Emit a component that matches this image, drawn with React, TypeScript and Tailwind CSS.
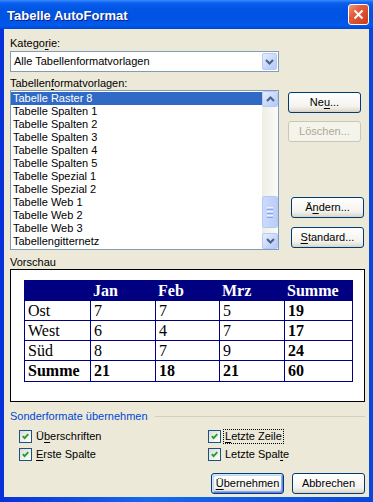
import type { ReactNode } from 'react'
import clsx from 'clsx'

const items = [
  'Tabelle Raster 8',
  'Tabelle Spalten 1',
  'Tabelle Spalten 2',
  'Tabelle Spalten 3',
  'Tabelle Spalten 4',
  'Tabelle Spalten 5',
  'Tabelle Spezial 1',
  'Tabelle Spezial 2',
  'Tabelle Web 1',
  'Tabelle Web 2',
  'Tabelle Web 3',
  'Tabellengitternetz',
]

const rows = [
  ['Ost', '7', '7', '5', '19'],
  ['West', '6', '4', '7', '17'],
  ['Süd', '8', '7', '9', '24'],
]

function U({ children }: { children: ReactNode }) {
  return <span className="underline decoration-1 underline-offset-[2px]">{children}</span>
}

function XpButton({
  children,
  disabled,
  isDefault,
  className,
}: {
  children: ReactNode
  disabled?: boolean
  isDefault?: boolean
  className?: string
}) {
  return (
    <div
      className={clsx(
        'h-[21px] w-[73px] shrink-0 rounded-[3px] border flex items-center justify-center',
        disabled
          ? 'border-[#c9c7ba] bg-[#f5f4ea] text-[#aca899]'
          : 'border-[#003c74] bg-[linear-gradient(180deg,#ffffff_0%,#f4f3ee_70%,#e3e0d5_90%,#d6d0c5_100%)]',
        isDefault &&
          'shadow-[inset_1px_1px_0_#cee7ff,inset_-1px_-1px_0_#6982ee,inset_2px_2px_0_#bcd4f6,inset_-2px_-2px_0_#89adf4]',
        className
      )}
    >
      {children}
    </div>
  )
}

function Chevron({ up }: { up?: boolean }) {
  return (
    <svg width="9" height="6" viewBox="0 0 9 6">
      <path
        d={up ? 'M1 5 L4.5 1.5 L8 5' : 'M1 1 L4.5 4.5 L8 1'}
        stroke="#4d6185"
        strokeWidth="2"
        fill="none"
      />
    </svg>
  )
}

function ScrollBtn({ up, className }: { up?: boolean; className?: string }) {
  return (
    <div
      className={clsx(
        'rounded-[2px] border border-[#b7c9f4] bg-[linear-gradient(135deg,#e6eefe_0%,#c6d6fc_60%,#b5c8f7_100%)] flex items-center justify-center',
        className
      )}
    >
      <Chevron up={up} />
    </div>
  )
}

function Scrollbar() {
  return (
    <div className="w-[16px] flex flex-col bg-[linear-gradient(90deg,#eeede5,#fbfbf8)]">
      <ScrollBtn up className="h-[16px]" />
      <div className="flex-1 flex flex-col pt-[89px]">
        <div className="h-[32px] rounded-[2px] border border-[#b7c9f4] bg-[linear-gradient(90deg,#cbdafd,#bbcdf9)] flex flex-col items-center justify-center gap-[1px]">
          <div className="w-[6px] h-px bg-[#eef3fe]" />
          <div className="w-[6px] h-px bg-[#8da6e8]" />
          <div className="w-[6px] h-px bg-[#eef3fe]" />
          <div className="w-[6px] h-px bg-[#8da6e8]" />
          <div className="w-[6px] h-px bg-[#eef3fe]" />
          <div className="w-[6px] h-px bg-[#8da6e8]" />
        </div>
      </div>
      <ScrollBtn className="h-[16px]" />
    </div>
  )
}

function XpCheck() {
  return (
    <div className="w-[13px] h-[13px] shrink-0 border border-[#1c5180] bg-[linear-gradient(135deg,#dcdcd7,#ffffff)] flex items-center justify-center">
      <svg width="7" height="7" viewBox="0 0 7 7">
        <path d="M0.8 3.2 L2.6 5.2 L6.3 1.2" stroke="#21a121" strokeWidth="1.8" fill="none" />
      </svg>
    </div>
  )
}

function Check({ children, focus }: { children: ReactNode; focus?: boolean }) {
  return (
    <div className="flex items-center h-[13px]">
      <XpCheck />
      <span
        className={clsx(
          'ml-[2px] px-[1px] border',
          focus ? 'border-dotted border-black' : 'border-transparent'
        )}
      >
        {children}
      </span>
    </div>
  )
}

export default function App() {
  return (
    <div className="w-[373px] h-[502px] overflow-hidden flex flex-col bg-[#0846dc] font-['Liberation_Sans',Arial,sans-serif] text-[11px] leading-[13px] text-black select-none">
      {/* title bar */}
      <div className="h-[29px] shrink-0 flex items-center pl-[7px] pr-[4px] bg-[linear-gradient(180deg,#3a8cfa_0%,#0b5ff0_10%,#0055e5_30%,#0053e1_60%,#0159ec_88%,#0047d2_100%)]">
        <div className="mt-[2px] text-[13px] leading-[15px] font-bold text-white [text-shadow:1px_1px_0_#0a1d8c]">
          Tabelle AutoFormat
        </div>
        <div className="ml-auto w-[21px] h-[21px] rounded-[3px] border border-white bg-[linear-gradient(135deg,#ee9a7e_0%,#e35d3b_35%,#cf3a17_100%)] flex items-center justify-center">
          <svg width="11" height="11" viewBox="0 0 11 11">
            <path d="M1.5 1.5 L9.5 9.5 M9.5 1.5 L1.5 9.5" stroke="#ffffff" strokeWidth="2" />
          </svg>
        </div>
      </div>

      {/* frame + body */}
      <div className="flex-1 flex px-[4px] pb-[5px] bg-[linear-gradient(90deg,#0831d9,#166aee_40%,#0846dc)]">
        <div className="flex-1 bg-[#ece9d8] flex flex-col pl-[6px] pt-[8px]">
          <div className="flex">
            <div className="w-[269px] flex flex-col">
              <div>
                Katego<U>r</U>ie:
              </div>
              <div className="mt-[1px] h-[21px] border border-[#7f9db9] bg-white flex items-center p-[1px]">
                <div className="flex-1 pl-[2px]">Alle Tabellenformatvorlagen</div>
                <ScrollBtn className="w-[15px] h-[17px]" />
              </div>
              <div className="mt-[5px]">
                Tabellen<U>f</U>ormatvorlagen:
              </div>
              <div className="h-[160px] border border-[#7f9db9] bg-white flex">
                <div className="flex-1 pt-[1px]">
                  {items.map((t, i) => (
                    <div
                      key={t}
                      className={clsx(
                        'h-[13px] pl-[2px] whitespace-nowrap',
                        i === 0 && 'bg-[#316ac5] text-white'
                      )}
                    >
                      {t}
                    </div>
                  ))}
                </div>
                <Scrollbar />
              </div>
            </div>
            <div className="ml-[9px] flex flex-col pt-[55px] pb-[2px]">
              <XpButton>
                Ne<U>u</U>...
              </XpButton>
              <XpButton disabled className="mt-[8px]">
                Löschen...
              </XpButton>
              <XpButton className="mt-auto ml-[3px]">
                Ä<U>n</U>dern...
              </XpButton>
              <XpButton className="mt-[9px] ml-[3px]">
                <U>S</U>tandard...
              </XpButton>
            </div>
          </div>

          <div className="mt-[6px]">Vorschau</div>
          <div className="w-[355px] h-[133px] border border-black bg-white pl-[13px] pt-[10px]">
            <table className="table-fixed border-collapse w-[328px] font-['Liberation_Serif','Times_New_Roman',serif] text-[16px] leading-[18px]">
              <colgroup>
                <col className="w-[66px]" />
                <col className="w-[65px]" />
                <col className="w-[64px]" />
                <col className="w-[65px]" />
                <col className="w-[68px]" />
              </colgroup>
              <thead>
                <tr className="h-[20px] bg-[#000080] text-white font-bold">
                  <th className="border border-[#000080]" />
                  <th className="border border-[#000080] text-left pl-[2px]">Jan</th>
                  <th className="border border-[#000080] text-left pl-[2px]">Feb</th>
                  <th className="border border-[#000080] text-left pl-[2px]">Mrz</th>
                  <th className="border border-[#000080] text-left pl-[2px]">Summe</th>
                </tr>
              </thead>
              <tbody>
                {rows.map((r) => (
                  <tr key={r[0]} className="h-[20px]">
                    {r.map((c, j) => (
                      <td
                        key={j}
                        className={clsx(
                          'border border-[#000080] pl-[3px] p-0',
                          j === 4 && 'font-bold'
                        )}
                      >
                        {c}
                      </td>
                    ))}
                  </tr>
                ))}
                <tr className="h-[21px] font-bold">
                  {['Summe', '21', '18', '21', '60'].map((c, j) => (
                    <td key={j} className="border border-[#000080] pl-[3px]">
                      {c}
                    </td>
                  ))}
                </tr>
              </tbody>
            </table>
          </div>

          <div className="mt-[8px] w-[355px] flex items-center text-[#0046d5]">
            <span>Sonderformate übernehmen</span>
            <div className="flex-1 h-px ml-[7px] bg-[#d0d0bf]" />
          </div>

          <div className="mt-[7px] pl-[9px] grid grid-cols-[189px_auto] gap-y-[5px]">
            <Check>
              Ü<U>b</U>erschriften
            </Check>
            <Check focus>
              <U>L</U>etzte Zeile
            </Check>
            <Check>
              <U>E</U>rste Spalte
            </Check>
            <Check>
              Letzte Spal<U>t</U>e
            </Check>
          </div>

          <div className="mt-[12px] pl-[201px] flex gap-[8px]">
            <XpButton isDefault>
              <U>Ü</U>bernehmen
            </XpButton>
            <XpButton>Abbrechen</XpButton>
          </div>
        </div>
      </div>
    </div>
  )
}
